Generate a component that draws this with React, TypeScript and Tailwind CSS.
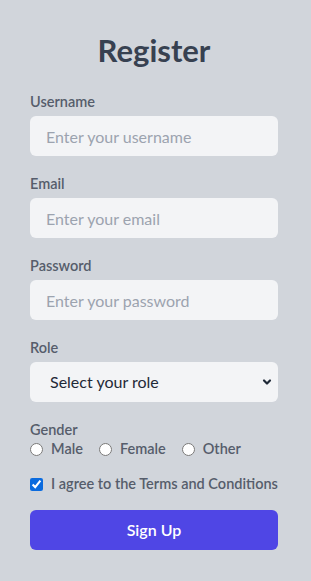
import React, { useState } from 'react';

const font = { fontFamily: '"Lato", "Noto Sans", sans-serif' };

const Field = ({ label, children }: { label: string; children: React.ReactNode }) => (
  <div>
    <label className="block pt-[2px] text-[14.5px] leading-5 font-semibold text-[#565d6b]">{label}</label>
    <div className="mt-1">{children}</div>
  </div>
);

export default function App() {
  const [agree, setAgree] = useState(true);
  const [gender, setGender] = useState('');

  const inputCls =
    'w-full h-10 px-4 rounded-md bg-[#f3f4f6] text-base text-[#1f2937] placeholder:text-[#9ca3af] outline-none';

  return (
    <div className="min-h-[581px] bg-[#d1d5db]" style={font}>
      <div className="pl-[30px] pr-[33px] pt-[30px] pb-8">
        <h1 className="text-[31px] leading-10 font-bold text-[#374151] text-center mb-5">Register</h1>
        <form className="space-y-4" onSubmit={(e) => e.preventDefault()}>
          <Field label="Username">
            <input type="text" placeholder="Enter your username" className={inputCls} />
          </Field>
          <Field label="Email">
            <input type="email" placeholder="Enter your email" className={inputCls} />
          </Field>
          <Field label="Password">
            <input type="password" placeholder="Enter your password" className={inputCls} />
          </Field>
          <Field label="Role">
            <div className="relative">
              <select className={inputCls + ' appearance-none pl-5'} defaultValue="">
                <option value="" disabled>Select your role</option>
                <option value="user">User</option>
                <option value="admin">Admin</option>
              </select>
              <svg
                className="absolute right-[6px] top-1/2 -translate-y-1/2 w-2.5 h-2.5 text-[#1f2937] pointer-events-none"
                viewBox="0 0 10 10"
                fill="none"
                stroke="currentColor"
                strokeWidth="2.2"
                strokeLinecap="round"
                strokeLinejoin="round"
              >
                <path d="M2 3.5 L5 6.5 L8 3.5" />
              </svg>
            </div>
          </Field>
          <div>
            <div className="pt-[2px] text-[14.5px] leading-5 font-semibold text-[#565d6b]">Gender</div>
            <div className="flex items-center gap-4 h-[18px]">
              {['Male', 'Female', 'Other'].map((g) => (
                <label key={g} className="flex items-center text-[14.5px] font-semibold text-[#565d6b]">
                  <input
                    type="radio"
                    name="gender"
                    checked={gender === g}
                    onChange={() => setGender(g)}
                    className="w-[13px] h-[13px] m-0"
                  />
                  <span className="ml-2">{g}</span>
                </label>
              ))}
            </div>
          </div>
          <label className="flex items-center h-5 text-[14.5px] font-semibold text-[#565d6b]">
            <input
              type="checkbox"
              checked={agree}
              onChange={(e) => setAgree(e.target.checked)}
              className="w-[13px] h-[13px] m-0 accent-[#0b6bde]"
            />
            <span className="ml-2">I agree to the Terms and Conditions</span>
          </label>
          <button
            type="submit"
            className="w-full h-10 rounded-md bg-[#4f46e5] text-white font-semibold text-base"
          >
            Sign Up
          </button>
        </form>
      </div>
    </div>
  );
}
